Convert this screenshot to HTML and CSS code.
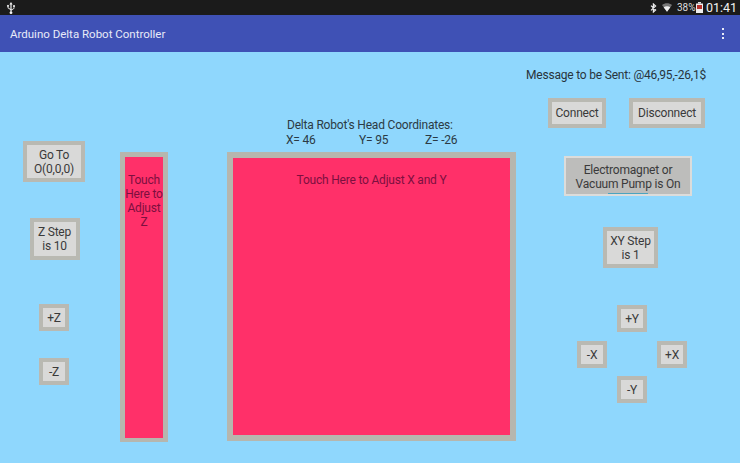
FILE: index.html
```html
<!DOCTYPE html>
<html lang="en">
<head>
<meta charset="utf-8">
<title>Arduino Delta Robot Controller</title>
<link rel="stylesheet" href="styles.css">
</head>
<body>
<div class="screen">
  <header class="status-bar">
    <svg class="usb" width="10" height="12" viewBox="0 0 10 12"><path d="M5 0 6.6 2.4H5.6V7.6L7.6 6.2V4.8H7V3.2H9V4.8H8.4V6.6L5.6 8.6V9.6A1.3 1.3 0 1 1 4.4 9.6V8L1.6 6V4.7A1 1 0 1 1 2.4 4.7V5.6L4.4 7V2.4H3.4Z" fill="#f2f2f2"/></svg>
    <div class="status-right">
      <svg class="bt" width="7" height="10" viewBox="0 0 7 10"><path d="M1 2.6 5.6 7 3.4 9V1L5.6 3 1 7.4" fill="none" stroke="#eee" stroke-width="1.2"/></svg>
      <svg class="wifi" width="10" height="11" viewBox="0 0 12 11"><path d="M6 10.5 0 2.6C3.4-.4 8.6-.4 12 2.6Z" fill="#777"/><path d="M6 10.5 2 5.2C4.2 3.4 7.8 3.4 10 5.2Z" fill="#f0f0f0"/></svg>
      <span class="battery-pct">38%</span>
      <svg class="battery" width="7" height="11" viewBox="0 0 7 11"><rect x="2" width="3" height="1.5" fill="#ddd"/><rect y="1.5" width="7" height="9.5" fill="#eee"/><rect x="1" y="3" width="5" height="4" fill="#b8322c"/></svg>
      <span class="clock">01:41</span>
    </div>
  </header>
  <header class="app-bar">
    <h1 class="app-title">Arduino Delta Robot Controller</h1>
    <div class="menu"><i></i><i></i><i></i></div>
  </header>
  <main class="content">
    <section class="col-left">
      <button class="btn goto">Go To<br>O(0,0,0)</button>
      <button class="btn zstep">Z Step<br>is 10</button>
      <button class="btn small zplus">+Z</button>
      <button class="btn small zminus">-Z</button>
    </section>
    <section class="pad pad-z">Touch Here to Adjust Z</section>
    <section class="col-center">
      <div class="coords">
        <div class="coords-title">Delta Robot's Head Coordinates:</div>
        <div class="coords-values"><span class="cx">X= 46</span><span class="cy">Y= 95</span><span>Z= -26</span></div>
      </div>
      <div class="pad pad-xy">Touch Here to Adjust X and Y</div>
    </section>
    <section class="col-right">
      <div class="message">Message to be Sent: @46,95,-26,1$</div>
      <div class="conn-row">
        <button class="btn connect">Connect</button>
        <button class="btn disconnect">Disconnect</button>
      </div>
      <button class="toggle">Electromagnet or<br>Vacuum Pump is On</button>
      <button class="btn xystep">XY Step<br>is 1</button>
      <div class="dpad">
        <button class="btn small up">+Y</button>
        <button class="btn small left">-X</button>
        <button class="btn small right">+X</button>
        <button class="btn small down">-Y</button>
      </div>
    </section>
  </main>
</div>
</body>
</html>
```
FILE: styles.css
```css
* { box-sizing: border-box; }
html, body { margin: 0; padding: 0; }
body { font-family: Roboto, "Liberation Sans", sans-serif; }
.screen { width: 740px; height: 463px; display: flex; flex-direction: column; overflow: hidden; background: #8fd7fd; }

.status-bar { height: 15px; background: #1b1b1b; display: flex; align-items: center; justify-content: space-between; padding: 0 5px 0 6px; color: #eee; }
.status-right { display: flex; align-items: center; }
.bt { margin-right: 5px; }
.wifi { margin-right: 5px; }
.battery-pct { font-size: 10px; width: 19px; color: #ddd; }
.battery { margin-right: 3px; }
.clock { font-size: 12.5px; width: 29px; white-space: nowrap; color: #f2f2f2; }

.app-bar { height: 37px; background: #3f51b5; display: flex; align-items: center; justify-content: space-between; padding: 0 16px 0 10px; }
.app-title { margin: 0; font-size: 11.5px; font-weight: 400; color: #e8ebf8; }
.menu { display: flex; flex-direction: column; gap: 2.5px; }
.menu i { display: block; width: 2px; height: 2px; background: #e8ebf8; }

.content { flex: 1; display: flex; align-items: flex-start; color: #333; font-size: 12px; letter-spacing: -0.2px; line-height: 14px; }

.btn { display: block; padding: 0; margin: 0; font: inherit; letter-spacing: inherit; line-height: 14px; color: #3a3a3a; background: #d9d9d8; border: 4px solid #b9b9b2; text-align: center; }
.small { width: 30px; height: 27px; }

.col-left { width: 108px; flex: none; display: flex; flex-direction: column; align-items: center; padding-top: 89px; margin-right: 12px; }
.goto { width: 62px; height: 41px; }
.zstep { width: 50px; height: 42px; margin: 36px 0 0 1px; }
.zplus { margin-top: 44px; }
.zminus { margin-top: 27px; }

.pad { background: #ff3069; border: 6px solid #b6b6ae; color: #7d0f3f; text-align: center; }
.pad-z { width: 48px; height: 290px; flex: none; margin: 100px 59px 0 0; padding: 16px 0 0; border-width: 5px 5px 4px; }
.col-center { width: 289px; flex: none; display: flex; flex-direction: column; }
.coords { height: 100px; padding: 66px 0 0; color: #2b3a44; }
.coords-title { margin-left: 60px; }
.coords-values { display: flex; margin: 1px 0 0 59px; }
.cx { width: 73px; }
.cy { width: 66px; }
.pad-xy { height: 289px; padding-top: 15px; }

.col-right { width: 224px; flex: none; display: flex; flex-direction: column; align-items: flex-start; padding-top: 16px; }
.message { margin-left: 10px; color: #28343c; white-space: nowrap; }
.conn-row { display: flex; gap: 23px; margin: 16px 0 0 32px; }
.connect { width: 58px; height: 30px; }
.disconnect { width: 76px; height: 30px; }
.toggle { width: 128px; height: 40px; margin: 28px 0 0 48px; padding: 1px 0 0; font: inherit; letter-spacing: inherit; line-height: 14px; color: #3a3a3a; background: #bdbdbb; border: 2px solid #dcdcda; position: relative; }
.toggle::after { content: ""; position: absolute; left: 42px; bottom: 0; width: 40px; height: 1px; background: #4aa3bf; }
.xystep { width: 55px; height: 41px; margin: 31px 0 0 87px; }
.dpad { display: grid; grid-template-columns: 30px 30px 30px; grid-template-rows: 36px 35px 27px; column-gap: 10px; margin: 37px 0 0 61px; }
.up { grid-column: 2; grid-row: 1; }
.left { grid-column: 1; grid-row: 2; }
.right { grid-column: 3; grid-row: 2; }
.down { grid-column: 2; grid-row: 3; }
```
